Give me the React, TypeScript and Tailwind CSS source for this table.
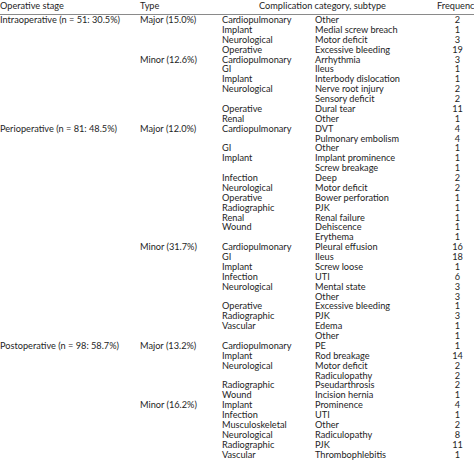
import React from "react";

type Row = [string, string, string, string, string];

const rows: Row[] = [
  ["Intraoperative (n = 51: 30.5%)", "Major (15.0%)", "Cardiopulmonary", "Other", "2"],
  ["", "", "Implant", "Medial screw breach", "1"],
  ["", "", "Neurological", "Motor deficit", "3"],
  ["", "", "Operative", "Excessive bleeding", "19"],
  ["", "Minor (12.6%)", "Cardiopulmonary", "Arrhythmia", "3"],
  ["", "", "GI", "Ileus", "1"],
  ["", "", "Implant", "Interbody dislocation", "1"],
  ["", "", "Neurological", "Nerve root injury", "2"],
  ["", "", "", "Sensory deficit", "2"],
  ["", "", "Operative", "Dural tear", "11"],
  ["", "", "Renal", "Other", "1"],
  ["Perioperative (n = 81: 48.5%)", "Major (12.0%)", "Cardiopulmonary", "DVT", "4"],
  ["", "", "", "Pulmonary embolism", "4"],
  ["", "", "GI", "Other", "1"],
  ["", "", "Implant", "Implant prominence", "1"],
  ["", "", "", "Screw breakage", "1"],
  ["", "", "Infection", "Deep", "2"],
  ["", "", "Neurological", "Motor deficit", "2"],
  ["", "", "Operative", "Bower perforation", "1"],
  ["", "", "Radiographic", "PJK", "1"],
  ["", "", "Renal", "Renal failure", "1"],
  ["", "", "Wound", "Dehiscence", "1"],
  ["", "", "", "Erythema", "1"],
  ["", "Minor (31.7%)", "Cardiopulmonary", "Pleural effusion", "16"],
  ["", "", "GI", "Ileus", "18"],
  ["", "", "Implant", "Screw loose", "1"],
  ["", "", "Infection", "UTI", "6"],
  ["", "", "Neurological", "Mental state", "3"],
  ["", "", "", "Other", "3"],
  ["", "", "Operative", "Excessive bleeding", "1"],
  ["", "", "Radiographic", "PJK", "3"],
  ["", "", "Vascular", "Edema", "1"],
  ["", "", "", "Other", "1"],
  ["Postoperative (n = 98: 58.7%)", "Major (13.2%)", "Cardiopulmonary", "PE", "1"],
  ["", "", "Implant", "Rod breakage", "14"],
  ["", "", "Neurological", "Motor deficit", "2"],
  ["", "", "", "Radiculopathy", "2"],
  ["", "", "Radiographic", "Pseudarthrosis", "2"],
  ["", "", "Wound", "Incision hernia", "1"],
  ["", "Minor (16.2%)", "Implant", "Prominence", "4"],
  ["", "", "Infection", "UTI", "1"],
  ["", "", "Musculoskeletal", "Other", "2"],
  ["", "", "Neurological", "Radiculopathy", "8"],
  ["", "", "Radiographic", "PJK", "11"],
  ["", "", "Vascular", "Thrombophlebitis", "1"],
];

export default function App() {
  return (
    <div
      className="w-[474px] h-[461px] overflow-hidden bg-white text-[#1e1e1e] text-[9.2px] leading-[9.886px]"
      style={{ fontFamily: "Lato, 'Open Sans', sans-serif" }}
    >
      <div className="h-[15px] border-b border-[#8a8a8a]">
        <div className="grid grid-cols-[140px_82px_93px_122px_37px] pt-[1px]">
          <div>Operative stage</div>
          <div>Type</div>
          <div className="col-span-2 text-center pr-[14px]">Complication category, subtype</div>
          <div className="whitespace-nowrap">Frequency</div>
        </div>
      </div>
      <div className="flex flex-col">
        {rows.map((r, i) => (
          <div key={i} className="grid grid-cols-[140px_82px_93px_122px_41px] h-[9.886px] whitespace-nowrap">
            <div>{r[0]}</div>
            <div>{r[1]}</div>
            <div>{r[2]}</div>
            <div>{r[3]}</div>
            <div className="text-center">{r[4]}</div>
          </div>
        ))}
      </div>
    </div>
  );
}
